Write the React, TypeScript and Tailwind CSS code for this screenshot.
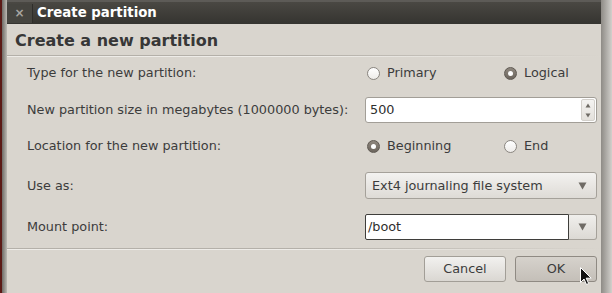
function Radio({ checked, label }: { checked?: boolean; label: string }) {
  return (
    <div className="flex items-center gap-[7px] pl-[2px]">
      {checked ? (
        <span className="flex h-[13px] w-[13px] items-center justify-center rounded-full border border-[#5f5952] bg-gradient-to-b from-[#8f887f] to-[#6c655d]">
          <span className="h-[5px] w-[5px] rounded-full bg-white" />
        </span>
      ) : (
        <span className="h-[13px] w-[13px] rounded-full border border-[#8a8680] bg-gradient-to-b from-white to-[#eeece9]" />
      )}
      <span>{label}</span>
    </div>
  );
}

function Arrow() {
  return (
    <svg width="9" height="8" viewBox="0 0 9 8">
      <path d="M0.5 0.5h8L4.5 7.5z" fill="#6f6b65" />
    </svg>
  );
}

function Row({ label, className, children }: { label: string; className: string; children: React.ReactNode }) {
  return (
    <div className={`flex items-center ${className}`}>
      <div className="w-[358px] shrink-0 whitespace-nowrap pl-[20px]">{label}</div>
      <div className="w-[232px] shrink-0">{children}</div>
    </div>
  );
}

export default function App() {
  return (
    <div className="relative flex h-[293px] w-[612px] overflow-hidden bg-[#c9c6c0] font-['DejaVu_Sans',sans-serif] text-[12.8px] text-[#3c3c3c]">
      <div className="w-[2px] shrink-0 bg-[#5b1a16]" />
      <div className="w-[5px] shrink-0 bg-gradient-to-r from-[#6e6b66] to-[#bcb9b3]" />
      <div className="flex w-[594px] shrink-0 flex-col">
        <div className="h-[2px] bg-[#5d5b57]" />
        <div className="flex h-[22px] items-center bg-gradient-to-b from-[#4a4843] to-[#353430]">
          <div className="flex h-[19px] w-[26px] items-center justify-center border-r border-[#2e2d2a] bg-[#464540] text-[12px] font-bold text-[#a9a7a2]">
            ×
          </div>
          <div className="pl-[4px] text-[13.3px] font-bold text-white">Create partition</div>
        </div>
        <div className="flex flex-1 flex-col bg-[#d9d5ce]">
          <div className="flex h-[31px] items-center pl-[8px] pt-[3px] text-[16px] font-bold text-[#373737]">
            Create a new partition
          </div>
          <div className="h-[1px] bg-gradient-to-r from-[#b4b0a9] via-[#b4b0a9] to-[#d9d5ce]" />
          <div className="h-[1px] bg-gradient-to-r from-[#eeece8] via-[#eeece8] to-[#d9d5ce]" />

          <Row label="Type for the new partition:" className="mt-[3px] h-[26px]">
            <div className="grid grid-cols-[137px_1fr]">
              <Radio label="Primary" />
              <Radio label="Logical" checked />
            </div>
          </Row>

          <Row label="New partition size in megabytes (1000000 bytes):" className="mt-[11px] h-[26px]">
            <div className="flex h-[26px] items-stretch rounded-[3px] border border-[#a29e97] bg-white">
              <div className="flex flex-1 items-center pl-[4px] text-[#2e2e2e]">500</div>
              <div className="my-[1px] mr-[1px] flex w-[14px] flex-col items-center justify-center gap-[5px] rounded-[2px] border border-[#d3d0cb] bg-gradient-to-b from-[#f4f3f1] to-[#e4e1dc]">
                <svg width="6" height="5" viewBox="0 0 6 5">
                  <path d="M3 0.5L5.5 4.5h-5z" fill="#6f6b65" />
                </svg>
                <svg width="6" height="5" viewBox="0 0 6 5">
                  <path d="M0.5 0.5h5L3 4.5z" fill="#6f6b65" />
                </svg>
              </div>
            </div>
          </Row>

          <Row label="Location for the new partition:" className="mt-[10px] h-[26px]">
            <div className="grid grid-cols-[137px_1fr]">
              <Radio label="Beginning" checked />
              <Radio label="End" />
            </div>
          </Row>

          <Row label="Use as:" className="mt-[13px] h-[27px]">
            <div className="flex h-[27px] items-center justify-between rounded-[3px] border border-[#a5a19a] bg-gradient-to-b from-[#f3f2f0] to-[#dedbd6] pl-[6px] pr-[9px]">
              <span>Ext4 journaling file system</span>
              <Arrow />
            </div>
          </Row>

          <Row label="Mount point:" className="mt-[15px] h-[26px]">
            <div className="flex h-[26px] items-stretch">
              <div className="flex flex-1 items-center rounded-l-[2px] border border-[#3f3e3b] bg-white pl-[2px] text-[#2e2e2e]">
                /boot
              </div>
              <div className="flex w-[28px] items-center justify-center rounded-r-[3px] border border-l-0 border-[#a5a19a] bg-gradient-to-b from-[#f0efec] to-[#dcd9d4]">
                <Arrow />
              </div>
            </div>
          </Row>

          <div className="mt-[8px] h-[1px] bg-gradient-to-r from-[#b4b0a9] via-[#b4b0a9] to-[#d9d5ce]" />
          <div className="h-[1px] bg-gradient-to-r from-[#eeece8] via-[#eeece8] to-[#d9d5ce]" />

          <div className="mt-[6px] flex justify-end gap-[9px] pr-[4px]">
            <button className="flex h-[26px] w-[82px] items-center justify-center rounded-[3px] border border-[#a29e97] bg-gradient-to-b from-[#f2f1ef] to-[#dad7d2] text-[#3c3c3c]">
              Cancel
            </button>
            <button className="flex h-[26px] w-[82px] items-center justify-center rounded-[3px] border border-[#8f8a83] bg-gradient-to-b from-[#d6d2cc] to-[#c4bfb8] text-[#3c3c3c]">
              OK
            </button>
          </div>
        </div>
      </div>
      <div className="w-[11px] shrink-0 bg-gradient-to-r from-[#8e8b86] to-[#d2d0cc]" />

      <svg className="absolute left-[580px] top-[267px]" width="12" height="18" viewBox="0 0 12 18">
        <path d="M0.5 0.5v15l3.5-3.5 2.5 5.5 2.2-1-2.5-5.3h5z" fill="#111" stroke="#fff" strokeWidth="1" strokeLinejoin="round" />
      </svg>
    </div>
  );
}
